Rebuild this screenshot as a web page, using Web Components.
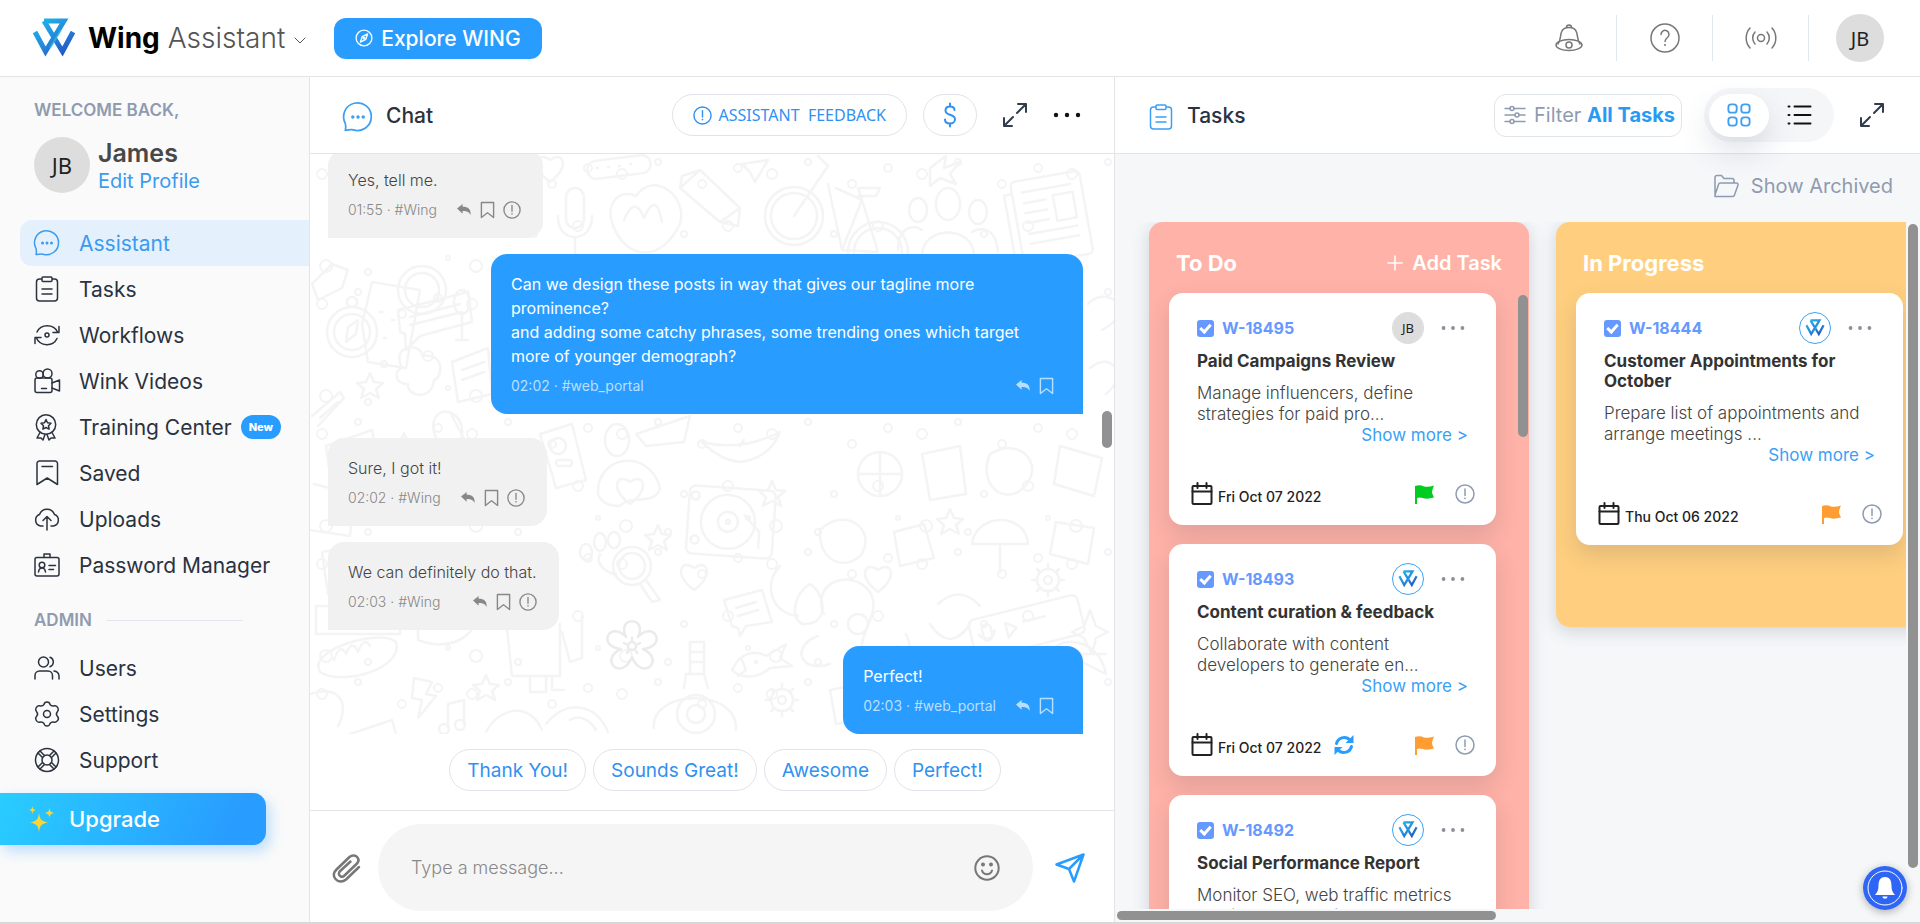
<!DOCTYPE html>
<html lang="en">
<head>
<meta charset="utf-8">
<title>Wing Assistant</title>
<meta name="viewport" content="width=device-width, initial-scale=1">
<style>
  html, body { height: 100%; }
  body {
    margin: 0;
    overflow: hidden;
    font-family: Inter, "Open Sans", sans-serif;
    color: #2b3240;
    --blue: #289dff;
    --line: #e4e4e6;
    --muted: #8f9bb0;
  }
</style>
</head>
<body>
<wing-app></wing-app>

<script>
const ICONS = {
  logo: ['0 0 44 40', `
    <defs><linearGradient id="g" gradientUnits="userSpaceOnUse" x1="8" y1="2" x2="34" y2="38">
      <stop offset="0" stop-color="#1fb5e8"/><stop offset=".5" stop-color="#2489dc"/><stop offset="1" stop-color="#2350c0"/>
    </linearGradient></defs>
    <path d="M12 3H32L13.5 33.500L3 14M12 3L30.500 33.500L41 14" stroke="url(#g)" stroke-width="5"/>
    <path d="M29 12L18 30" stroke="#35c3ec" stroke-width="2" opacity=".6"/>`],
  chat: ['0 0 26 26', '<path d="M2 24.500C2.800 22 2.500 20.500 2 18.500A12 12 0 1 1 9 24.200C6.500 23.600 4.500 24.500 2 24.500Z"/><g fill="currentColor" stroke="none"><circle cx="8.500" cy="13" r="1.500"/><circle cx="13" cy="13" r="1.500"/><circle cx="17.500" cy="13" r="1.500"/></g>'],
  tasks: ['0 0 26 26', '<rect x="2.500" y="3" width="21" height="22" rx="3"/><rect x="8" y="1" width="10" height="4.500" rx="1" fill="#fff"/><path d="M8 13h10M8 18h10"/>'],
  workflows: ['0 0 26 26', '<path d="M3 10A11 10 0 0 1 23.500 10M23 16.500A11 10 0 0 1 2.500 16M25 4.500V10.500H19M1 21.500V15.500H7"/><circle cx="13" cy="13" r="2"/>'],
  videos: ['0 0 26 26', '<circle cx="5.500" cy="6.500" r="3.700"/><circle cx="13.500" cy="5.500" r="4.500"/><rect x="1" y="10" width="17" height="14.500" rx="2"/><path d="M18 15L25.500 12V23L18 20M7.500 20.500h5"/>'],
  training: ['0 0 26 26', '<circle cx="12" cy="10.500" r="9.700"/><path d="M12 5.500l1.500 3.200 3.500.5-2.500 2.500.6 3.500-3.100-1.700-3.100 1.700.6-3.500L7 9.200l3.500-.5zM6 18.500L3 24h4l2 2 2-5.500M18 18.500L21 24h-4l-2 2-2-5.500"/>'],
  saved: ['0 0 26 26', '<path d="M3 3.500A2.500 2.500 0 0 1 5.500 1H21A2.500 2.500 0 0 1 23.500 3.500V24.500L13.200 18L3 24.500ZM8 6.500H18.500"/>'],
  uploads: ['0 0 26 26', '<path d="M9 20H6.500A6 6 0 0 1 5.500 8.500A8 8 0 0 1 20.500 8.500A6 6 0 0 1 19.500 20H17M13 24V11M9 14.500L13 10.500L17 14.500"/>'],
  password: ['0 0 26 26', '<rect x="1" y="5.500" width="24" height="18.500" rx="2"/><path d="M10 5.500V2H16V5.500M4.500 20C5 16.500 6.500 16 8 16S11 16.500 11.500 20M15 13.500h6.500M15 17.500h4.500"/><circle cx="8" cy="13" r="2.800"/>'],
  users: ['0 0 26 26', '<circle cx="9.500" cy="7" r="5"/><path d="M1 24V20.500A4.500 4.500 0 0 1 5.500 16H14A4.500 4.500 0 0 1 18.500 20.500V24M16 2.300A5 5 0 0 1 16 11.700M20 16A5.500 5.500 0 0 1 25 21V24"/>'],
  settings: ['0 0 26 26', '<path d="M10 3.500C10.300 1.500 11 1 13 1S15.700 1.500 16 3.500C17.500 5.500 18.500 5.300 20.500 4.800C22.500 4.300 23 5 24 7S24.500 9.500 23.200 11C22 12.500 22 13.500 23.200 15C24.500 16.500 25 17.500 24 19S22.500 21.700 20.500 21.200C18.500 20.700 17.500 20.500 16 22.500C15.700 24.500 15 25 13 25S10.300 24.500 10 22.500C8.500 20.500 7.500 20.700 5.500 21.200C3.500 21.700 3 21 2 19S1.500 16.500 2.800 15C4 13.500 4 12.500 2.800 11C1.500 9.500 1 9 2 7S3.500 4.300 5.500 4.800C7.500 5.300 8.500 5.500 10 3.500Z"/><circle cx="13" cy="13" r="3.500"/>'],
  support: ['0 0 26 26', '<circle cx="13" cy="13" r="11.500"/><circle cx="13" cy="13" r="5"/><path d="M4 6L8.500 10.500M6 4L10.500 8.500M22 6L17.500 10.500M20 4L15.500 8.500M4 20L8.500 15.500M6 22L10.500 17.500M22 20L17.500 15.500M20 22L15.500 17.500"/>'],
  sparkles: ['0 0 26 26', '<g fill="#fcd435" stroke="none"><path d="M10 7C11 13.500 12 15 19 16.500C12 18 11 19.500 10 26C9 19.500 8 18 1 16.500C8 15 9 13.500 10 7Z"/><path d="M20.500 1.500C21 5.500 21.500 6 25.500 7C21.500 8 21 8.500 20.500 12C20 8.500 19.500 8 15.500 7C19.500 6 20 5.500 20.500 1.500Z"/><path d="M3.500 0C4 3 4.500 3.300 7 4C4.500 4.700 4 5 3.500 8C3 5 2.500 4.700 0 4C2.500 3.300 3 3 3.500 0Z"/></g>'],
  compass: ['0 0 20 20', '<circle cx="10" cy="10" r="8.800"/><path d="M14 5.500L12 11.500L6 14.500L8 8.500Z"/><circle cx="10" cy="10" r="1"/>'],
  chevron: ['0 0 12 12', '<path d="M1 4L6 9L11 4"/>'],
  bell: ['0 0 30 30', '<path d="M4 21C7 17 6 13 7.500 9C8.500 6 11.500 4.500 15 4.500S21.500 6 22.500 9C24 13 23 17 26 21"/><ellipse cx="15" cy="22" rx="13" ry="5.500"/><circle cx="15" cy="22" r="3"/><path d="M12.500 4.500A2.500 2.500 0 1 1 17.500 4.500"/>'],
  help: ['0 0 30 30', '<circle cx="15" cy="15" r="14"/><path d="M11 11.500A4 4 0 1 1 17.500 14.500C15.500 16 15 16.500 15 18.500"/><circle cx="15" cy="22" r="1" fill="currentColor" stroke="none"/>'],
  broadcast: ['0 0 32 24', '<circle cx="16" cy="12" r="3.500"/><path d="M10 6A9 9 0 0 0 10 18M22 6A9 9 0 0 1 22 18M5 2A15 15 0 0 0 5 22M27 2A15 15 0 0 1 27 22"/>'],
  info: ['0 0 20 20', '<circle cx="10" cy="10" r="9"/><path d="M10 5V11.500"/><circle cx="10" cy="14.300" r=".9" fill="currentColor" stroke="none"/>'],
  dollar: ['0 0 14 26', '<path d="M11.500 8C11.500 5.500 9.500 4.500 7 4.500S2.500 6 2.500 8.500S4.500 12 7 12.800S12 14.500 12 17.300S9.500 21.500 7 21.500S2 20.500 2 17.500M7 1.500V4.500M7 21.500V24.500"/>'],
  expand: ['0 0 26 26', '<path d="M15 11L24 2M16 2H24V10M11 15L2 24M2 16V24H10"/>'],
  dots: ['0 0 28 8', '<g fill="currentColor" stroke="none"><circle cx="3" cy="4" r="2.200"/><circle cx="14" cy="4" r="2.200"/><circle cx="25" cy="4" r="2.200"/></g>'],
  reply: ['0 0 16 16', '<path d="M0 6.500L6 1.500V4.500C12 4.500 15 7 14.500 13.500C13 10 11 9 6 9V12Z" fill="currentColor" stroke="none"/>'],
  bookmark: ['0 0 16 18', '<path d="M1.500 1H14.500V17L8 12L1.500 17Z"/>'],
  sliders: ['0 0 20 20', '<path d="M0 3.500H5M9 3.500H20M0 10H10M14 10H20M0 16.500H5M9 16.500H20"/><circle cx="7" cy="3.500" r="2"/><circle cx="12" cy="10" r="2"/><circle cx="7" cy="16.500" r="2"/>'],
  grid: ['0 0 26 26', '<rect x="1.500" y="1.500" width="9" height="9" rx="3"/><rect x="15.500" y="1.500" width="9" height="9" rx="3"/><rect x="1.500" y="15.500" width="9" height="9" rx="3"/><rect x="15.500" y="15.500" width="9" height="9" rx="3"/>'],
  list: ['0 0 24 20', '<path d="M7 1.500H23M7 10H23M7 18.500H23M1 1.500H2M1 10H2M1 18.500H2"/>'],
  folder: ['0 0 26 24', '<path d="M2 22.500V3A2 2 0 0 1 4 1.500H8.500L11 4.500H19A2 2 0 0 1 21 6.500V9M2 21L5.500 10.500A2 2 0 0 1 7.500 9H23.500A1.500 1.500 0 0 1 25 11L21.500 21A2 2 0 0 1 19.500 22.500H3A1.500 1.500 0 0 1 2 21"/>'],
  plus: ['0 0 16 16', '<path d="M8 1V15M1 8H15"/>'],
  calendar: ['0 0 22 24', '<rect x="1.500" y="4" width="19" height="18" rx="1"/><path d="M1.500 9.500H20.500M6.500 1V6M15.500 1V6"/>'],
  flag: ['0 0 20 20', '<path d="M0 2Q5 .5 9 2.500Q13 3.500 19 1.500Q17 6 17 8Q17 10 19 13.500Q12 15.500 8 14Q4 13 2 14V20H0Z" fill="currentColor" stroke="none"/>'],
  sync: ['0 0 20 20', '<path d="M2.500 8.500A8 8 0 0 1 15.500 4.500M17.500 11.500A8 8 0 0 1 4.500 15.500" stroke-width="3"/><path d="M19.500 0V8H11.500ZM.5 20V12H8.500Z" fill="currentColor" stroke="none"/>'],
  clip: ['0 0 30 30', '<path d="M27 14L14 26.500C10.500 29.500 6 29 3.500 26S1.500 19.500 4.500 16.500L17.500 4C20 1.700 23.500 2 25.300 4.200S26.500 9 24.500 11L12.500 22.500C11 24 9 24 7.700 22.700S6.700 19.500 8.200 18L18.500 8.500"/>'],
  smile: ['0 0 26 26', '<circle cx="13" cy="13" r="11.700"/><path d="M8 15.500C9.500 20.500 16.500 20.500 18 15.500"/><g fill="currentColor" stroke="none"><circle cx="9" cy="9.500" r="2"/><circle cx="17" cy="9.500" r="2"/></g>'],
  send: ['0 0 30 30', '<path d="M28.500 1.500L1.500 11.500L14 16L19 28.500ZM28.500 1.500L14 16"/>'],
  alert: ['0 0 44 44', '<circle cx="22" cy="22" r="22" fill="#2f65f5" stroke="none"/><circle cx="22" cy="22" r="17" stroke="#fff" stroke-width="1"/><path d="M22 11C16.500 11 15.500 15.500 15.500 20C15.500 24.500 14 26.500 12 29H32C30 26.500 28.500 24.500 28.500 20C28.500 15.500 27.500 11 22 11ZM19.500 30.500H24.500C24.500 33.500 19.500 33.500 19.500 30.500Z" fill="#fff" stroke="none"/>']
};

const define = (name, html, setup) => {
  const template = document.createElement('template');
  template.innerHTML = html;
  customElements.define(name, class extends HTMLElement {
    constructor() {
      super();
      this.attachShadow({ mode: 'open' });
      this.shadowRoot.appendChild(template.content.cloneNode(true));
    }
    connectedCallback() {
      if (setup) setup(this, this.shadowRoot);
    }
  });
};

define('wing-icon', `
  <style>
    :host { display: inline-block; flex: none; width: 26px; height: 26px; white-space: normal; }
    svg { display: block; width: 100%; height: 100%; overflow: visible; }
  </style>
  <svg fill="none" stroke="currentColor" aria-hidden="true"></svg>
`, (host, root) => {
  const [viewBox, shapes] = ICONS[host.getAttribute('name')];
  const svg = root.querySelector('svg');
  svg.setAttribute('viewBox', viewBox);
  svg.setAttribute('stroke-width', host.getAttribute('weight') || '1.5');
  if (host.getAttribute('name') !== 'logo') {
    svg.setAttribute('stroke-linecap', 'round');
    svg.setAttribute('stroke-linejoin', 'round');
  }
  svg.innerHTML = shapes;
});

define('wing-avatar', `
  <style>
    :host {
      display: flex; flex: none; align-items: center; justify-content: center; box-sizing: border-box;
      width: 48px; height: 48px; border-radius: 50%; background: #ddd; color: #222;
      font: 20px "Noto Sans", "Open Sans", sans-serif;
    }
    :host([size="large"]) { width: 56px; height: 56px; font-size: 22px; }
    :host([size="small"]) { width: 32px; height: 32px; font-size: 13px; }
    :host([brand]) { background: #fff; border: 1px solid #3ba2f5; }
    wing-icon { width: 20px; height: 18px; }
  </style>
  <slot></slot>
`, (host, root) => {
  if (host.hasAttribute('brand')) root.querySelector('slot').innerHTML = '<wing-icon name="logo"></wing-icon>';
});

define('wing-header', `
  <style>
    :host {
      display: flex; align-items: center; height: 76px; padding: 0 36px 0 32px;
      background: #fff; border-bottom: 1px solid var(--line);
    }
    .brand {
      display: flex; align-items: center; padding: 0; border: 0; background: none;
      font: 300 28px Inter, sans-serif; color: #555; margin-right: 28px;
    }
    .brand wing-icon { width: 44px; height: 40px; margin-right: 12px; }
    .brand strong { color: #000; font-weight: 700; margin-right: 8px; }
    .brand .down { width: 12px; height: 12px; margin: 4px 0 0 9px; }
    .explore {
      display: flex; align-items: center; gap: 8px; height: 41px; padding: 0 21px; border: 0; border-radius: 12px;
      background: var(--blue); color: #fff; font: 500 21px Inter, sans-serif;
    }
    .explore wing-icon { width: 18px; height: 18px; }
    .tools { display: flex; align-items: center; margin-left: auto; }
    .tools button {
      display: flex; justify-content: center; width: 96px; padding: 8px 0; border: 0;
      border-right: 1px solid #e2e9ee; background: none; color: #777;
    }
    .tools wing-icon { width: 32px; height: 30px; }
    wing-avatar { margin-left: 27px; }
  </style>
  <button class="brand"><wing-icon name="logo"></wing-icon><strong>Wing</strong>Assistant<wing-icon class="down" name="chevron" weight="1"></wing-icon></button>
  <button class="explore"><wing-icon name="compass"></wing-icon>Explore WING</button>
  <div class="tools">
    <button aria-label="Notifications"><wing-icon name="bell"></wing-icon></button>
    <button aria-label="Help"><wing-icon name="help"></wing-icon></button>
    <button aria-label="Live"><wing-icon name="broadcast"></wing-icon></button>
    <wing-avatar>JB</wing-avatar>
  </div>
`);

define('wing-nav-item', `
  <style>
    :host { display: block; margin-left: 20px; }
    a {
      display: flex; align-items: center; height: 46px; padding-left: 14px; border-radius: 12px 0 0 12px;
      color: inherit; text-decoration: none; font-size: 21px;
    }
    wing-icon { margin-right: 19px; }
    :host([active]) a { background: #e4f1fc; color: #3b9bf0; }
  </style>
  <a href="#"><slot></slot></a>
`, (host, root) => {
  root.querySelector('a').insertAdjacentHTML('afterbegin', `<wing-icon name="${host.getAttribute('icon')}"></wing-icon>`);
});

define('wing-sidebar', `
  <style>
    :host { display: block; background: #fafafa; border-right: 1px solid var(--line); overflow: hidden; }
    h2 { margin: 0 0 0 34px; font-size: 17px; line-height: 20px; font-weight: 600; color: var(--muted); }
    .welcome { padding-top: 23px; }
    .profile { display: flex; gap: 8px; margin: 15px 0 25px 34px; align-items: center; }
    .profile div { padding-top: 2px; }
    .name { font-size: 25px; line-height: 28px; font-weight: 600; color: #484848; }
    .profile a { font-size: 20px; line-height: 28px; color: #3b9bf0; text-decoration: none; }
    .admin { display: flex; align-items: center; gap: 14px; margin: 22px 66px 15px 34px; }
    .admin::after { content: ""; flex: 1; border-top: 1px solid #e2e5e9; }
    .new {
      margin-left: 9px; padding: 0 8px; border-radius: 12px; background: var(--blue); color: #fff;
      font-size: 11px; line-height: 24px; font-weight: 800;
    }
    .upgrade {
      display: flex; align-items: center; gap: 14px; width: 266px; height: 52px; margin-top: 10px; padding: 0 0 0 29px;
      border: 0; border-radius: 0 13px 13px 0; color: #fff; font: 500 22px Inter, sans-serif;
      background: linear-gradient(115deg, #29cdff, #289dff 85%); box-shadow: 4px 6px 14px rgba(40, 157, 255, .3);
    }
  </style>
  <h2 class="welcome">WELCOME BACK,</h2>
  <div class="profile">
    <wing-avatar size="large">JB</wing-avatar>
    <div><div class="name">James</div><a href="#">Edit Profile</a></div>
  </div>
  <nav>
    <wing-nav-item icon="chat" active>Assistant</wing-nav-item>
    <wing-nav-item icon="tasks">Tasks</wing-nav-item>
    <wing-nav-item icon="workflows">Workflows</wing-nav-item>
    <wing-nav-item icon="videos">Wink Videos</wing-nav-item>
    <wing-nav-item icon="training">Training Center<span class="new">New</span></wing-nav-item>
    <wing-nav-item icon="saved">Saved</wing-nav-item>
    <wing-nav-item icon="uploads">Uploads</wing-nav-item>
    <wing-nav-item icon="password">Password Manager</wing-nav-item>
    <h2 class="admin">ADMIN</h2>
    <wing-nav-item icon="users">Users</wing-nav-item>
    <wing-nav-item icon="settings">Settings</wing-nav-item>
    <wing-nav-item icon="support">Support</wing-nav-item>
  </nav>
  <button class="upgrade"><wing-icon name="sparkles"></wing-icon>Upgrade</button>
`);

define('wing-panel-bar', `
  <style>
    :host {
      display: flex; flex: none; align-items: center; height: 76px; padding: 0 33px;
      background: #fff; border-bottom: 1px solid var(--line);
    }
    h1 { margin: 0 auto 0 13px; font-size: 21px; font-weight: 500; }
    ::slotted(wing-icon) { margin-top: 4px; color: #3b9ff5; }
  </style>
  <slot name="icon"></slot>
  <h1><slot name="title"></slot></h1>
  <slot></slot>
`);

define('wing-bubble', `
  <style>
    :host {
      display: block; box-sizing: border-box; align-self: flex-start; padding: 18px 22px 16px 20px; max-width: 592px;
      border-radius: 16px 16px 16px 0; background: #f1f1f1; color: #444;
      font-size: 16px; line-height: 24px; font-weight: 300;
    }
    :host([mine]) {
      align-self: flex-end; padding-right: 29px; border-radius: 16px 16px 0 16px;
      background: var(--blue); color: #fff; font-weight: 400;
    }
    .meta { display: flex; align-items: center; margin-top: 6px; font-size: 14px; color: #888; }
    .meta span { margin-right: auto; padding-right: 12px; }
    :host([mine]) .meta { color: #b9dfff; }
    button { display: flex; padding: 0; border: 0; background: none; color: inherit; margin-left: 8px; }
    wing-icon { width: 15px; height: 18px; }
    .report wing-icon { width: 18px; }
    :host([mine]) .report { display: none; }
  </style>
  <slot></slot>
  <div class="meta">
    <span></span>
    <button aria-label="Reply"><wing-icon name="reply"></wing-icon></button>
    <button aria-label="Save"><wing-icon name="bookmark"></wing-icon></button>
    <button class="report" aria-label="Report"><wing-icon name="info"></wing-icon></button>
  </div>
`, (host, root) => {
  root.querySelector('span').textContent = host.getAttribute('meta');
});

// Faint line drawings behind the conversation
define('wing-doodles', `
  <style>
    :host { position: absolute; inset: 0; overflow: hidden; }
    svg { width: 100%; height: 100%; }
  </style>
  <svg viewBox="0 0 805 580" preserveAspectRatio="xMinYMin slice" fill="none" stroke="#f4f4f4" stroke-width="2.500" stroke-linecap="round" stroke-linejoin="round" aria-hidden="true">
    <defs>
      <pattern id="bits" width="150" height="130" patternUnits="userSpaceOnUse">
        <g stroke-width="2"><circle cx="12" cy="20" r="5"/><circle cx="48" cy="8" r="3"/><circle cx="92" cy="30" r="4"/><circle cx="128" cy="14" r="4"/><circle cx="74" cy="80" r="3"/><circle cx="118" cy="72" r="5"/><circle cx="16" cy="112" r="6"/><circle cx="58" cy="118" r="3"/><circle cx="138" cy="104" r="2"/></g>
      </pattern>
      <path id="star" d="M0-13L4-4L13-3L6 3L9 12L0 7L-9 12L-6 3L-13-3L-4-4Z"/>
      <path id="heart" d="M0 14C-22-2-12-18 0-8C12-18 22-2 0 14Z"/>
      <g id="note"><path d="M-6 12V-12L10-16V8"/><circle cx="-10" cy="13" r="5"/><circle cx="6" cy="9" r="5"/></g>
      <g id="cog"><circle r="11"/><circle r="4"/><path d="M0-11V-16M0 11V16M-11 0H-16M11 0H16M-8-8L-11-11M8 8L11 11M-8 8L-11 11M8-8L11-11"/></g>
    </defs>
    <rect width="805" height="580" fill="url(#bits)" stroke="none"/>
    <use href="#heart" x="240" y="14"/><rect x="277" y="4" width="64" height="18" rx="9" transform="rotate(-7 309 13)"/><path d="M287 14h1M298 13h1M309 12h1M320 10h1"/>
    <g transform="translate(265 62)"><rect x="-9" y="-28" width="18" height="40" rx="9"/><path d="M-17 0C-18 28 18 28 17 0M0 21V38"/></g>
    <path d="M305 76C292 50 310 34 326 42C344 16 378 42 370 70C350 110 318 104 305 76ZM314 66Q325 40 334 64Q346 36 352 68"/>
    <path d="M372 22L390 16L430 54L428 72L410 68L370 34ZM390 16L370 34M430 54L410 68"/>
    <path d="M432 10L458 6L445 28L440 18Z"/>
    <g><circle cx="484" cy="62" r="29"/><circle cx="484" cy="62" r="23"/><circle cx="568" cy="98" r="30"/><circle cx="568" cy="98" r="24"/><path d="M484 62L518 12L508 2M518 30L532 96L568 98L552 46L526 34M532 96L552 46L548 34H570L566 42H548"/></g>
    <path d="M620 14L636 2L634 14L650 8L640 20L646 30L630 24L620 32Z"/>
    <g><ellipse cx="638" cy="50" rx="12" ry="16"/><ellipse cx="608" cy="56" rx="9" ry="12"/><ellipse cx="668" cy="58" rx="9" ry="12"/><path d="M612 104C610 70 666 70 664 104M588 96C588 72 604 70 612 76M688 98C686 74 672 72 662 78"/></g>
    <g transform="rotate(-10 740 60)"><rect x="706" y="22" width="70" height="84" rx="5"/><path d="M716 34H765M716 45H738M716 55H738M716 65H738M716 76H765M716 86H765M706 34H698V106H736"/><rect x="746" y="42" width="20" height="26"/></g>
    <path d="M62 128L110 136L96 214L58 208L52 170ZM70 158h2M82 166h2M74 184h2"/><circle cx="112" cy="136" r="24"/><circle cx="112" cy="136" r="17"/><ellipse cx="152" cy="148" rx="8" ry="12"/><path d="M152 160V184M146 186H158"/>
    <g><circle cx="42" cy="178" r="25"/><circle cx="42" cy="178" r="18"/><path d="M36 188L38 173L48 166L46 180Z"/><circle cx="42" cy="148" r="5"/></g>
    <path d="M88 156L158 138L162 168L110 182L96 196L95 180L90 178ZM100 163L150 150M100 171L152 158"/>
    <path d="M142 208L178 194L182 240L148 248ZM152 216L174 208M152 226L174 218"/>
    <use href="#star" x="60" y="232"/><path d="M92 214C80 190 112 188 112 202C134 198 134 222 124 226C122 248 96 242 98 230C84 230 84 216 92 214Z"/>
    <path d="M2 262L30 238L34 244L8 272M10 264L28 248"/><path d="M16 292L62 276L70 316L20 322Z"/><use href="#star" x="94" y="292"/>
    <path d="M135 296C110 270 130 248 146 262C158 274 152 296 135 296ZM140 258L162 300"/>
    <path d="M230 280L262 270L276 326L246 334Z"/><circle cx="248" cy="292" r="8"/><rect x="246" y="306" width="16" height="6" rx="3"/>
    <ellipse cx="307" cy="286" rx="12" ry="16"/><path d="M326 280L380 262L374 288L336 292Z"/>
    <path d="M288 340C286 300 340 294 350 334C346 352 320 340 310 352C300 352 292 350 288 340Z"/><use href="#heart" x="320" y="336"/>
    <path d="M392 288Q430 298 470 278Q460 304 430 308Q410 306 392 288ZM430 292L434 286"/>
    <g transform="rotate(4 420 366)"><rect x="378" y="334" width="86" height="68" rx="6"/><circle cx="418" cy="368" r="27"/><circle cx="418" cy="368" r="10"/><circle cx="418" cy="368" r="2"/><circle cx="384" cy="344" r="4"/><circle cx="386" cy="388" r="4"/><path d="M434 360L450 376V392"/></g>
    <use href="#star" x="462" y="340"/><use href="#star" x="348" y="384"/>
    <ellipse cx="276" cy="398" rx="6" ry="8"/><ellipse cx="290" cy="388" rx="6" ry="9"/><ellipse cx="304" cy="386" rx="6" ry="8"/><circle cx="322" cy="412" r="19"/><circle cx="322" cy="412" r="13"/><path d="M336 426L350 446L342 448L330 430M290 400C284 412 300 420 306 420"/>
    <use href="#heart" x="384" y="422"/><path d="M414 446L452 436L462 468L436 472L430 482L428 474L422 472ZM426 454L446 448M428 462L448 456"/>
    <path d="M470 412C452 430 462 460 488 462M500 430C484 440 480 462 492 470C520 472 516 440 500 430"/>
    <g transform="translate(322 492)" stroke="#ebebeb"><path d="M-6-9C-16-30 16-30 6-9C22-26 36 0 11 3C34 14 10 36 0 11C-10 36-34 14-11 3C-36 0-22-26-6-9Z"/><circle r="4"/><path d="M0-8V-6M8-3L6-2M5 7L4 5M-5 7L-4 5M-8-3L-6-2"/></g>
    <path d="M10 518C-4 496 70 474 86 488C94 516 30 532 10 518ZM24 506Q30 488 36 500Q42 484 48 498Q54 482 60 492"/>
    <path d="M108 458V486Q140 498 160 478L166 462M196 466L202 522H250V470M252 478L260 508L272 504V462M220 522V538H236V522M242 522V536H254"/>
    <path d="M104 524L122 528L116 540L126 542L108 564L112 546L102 544Z"/><use href="#star" x="176" y="534"/><use href="#note" x="144" y="562"/>
    <path d="M0 540C30 530 40 550 28 572M40 580L82 566L86 580M176 578C190 552 220 548 232 576M236 570C258 544 286 550 298 578M260 566C270 560 280 566 286 576"/>
    <path d="M422 516C430 498 446 496 456 502L476 490L470 504L482 512L460 514C446 526 430 524 422 516ZM432 506L436 516L428 522"/><circle cx="446" cy="508" r="1"/>
    <g><path d="M344 574C340 536 428 532 426 576M374 534L376 520H394L398 534M380 520V488H394V520M380 498H394M380 508H394"/><circle cx="386" cy="560" r="19"/><circle cx="386" cy="560" r="9"/></g><use href="#cog" x="472" y="546"/>
    <g><path d="M514 460C500 430 540 412 560 438C574 464 540 482 556 510C580 532 612 516 596 480M508 482C480 492 490 520 520 510"/><path d="M620 470Q640 500 660 470M628 450Q650 430 670 452"/><circle cx="548" cy="470" r="10"/></g>
    <g transform="rotate(-14 720 470)"><rect x="660" y="452" width="112" height="40" rx="6"/><rect x="672" y="460" width="9" height="14" rx="4"/><path d="M668 468Q676 484 684 468M696 463V478L706 470ZM714 466H736"/></g>
    <path d="M780 456L786 472L798 478L786 484L782 500L774 484L762 478L774 472ZM744 494C760 480 790 490 796 520ZM744 500H796"/>
    <g><circle cx="570" cy="320" r="22"/><path d="M548 320H592M570 298V342"/><path d="M612 300L650 292L656 340L620 346ZM680 300C712 280 740 316 708 338C690 348 668 328 680 300ZM750 292L792 304L784 342L744 330Z"/><use href="#star" x="640" y="368"/><path d="M510 376C534 352 566 374 552 400C536 418 508 408 510 376ZM584 378L614 370L624 404L590 412ZM662 390C666 358 716 358 718 390ZM690 390V418M746 368L784 374L778 410L740 400Z"/><use href="#heart" x="568" y="424"/><use href="#cog" x="738" y="426"/></g>
    <path d="M4 330L44 340L40 382L0 376M12 398L56 390V432L18 440ZM6 452H90V480H6Z"/><path d="M520 536L560 528L566 564L526 570Z"/><use href="#note" x="616" y="552"/>
    <path d="M2 130L22 110L38 116L32 134L8 146ZM778 150C796 130 830 156 792 176M780 214C800 196 820 220 796 240"/>
  </svg>
`);

define('wing-thumb', `
  <style>
    :host { display: block; flex: none; box-sizing: border-box; width: 10px; border-radius: 5px; background: #919191; }
  </style>
`);

define('wing-chat', `
  <style>
    :host { display: flex; flex-direction: column; min-width: 0; min-height: 0; background: #fff; border-right: 1px solid var(--line); }
    .pill {
      display: flex; align-items: center; gap: 7px; height: 42px; padding: 0 20px; border: 1px solid #e0e3ea;
      border-radius: 21px; background: #fff; color: #3191f0; font: 16px "Noto Sans", "Open Sans", sans-serif; white-space: pre;
    }
    .pill wing-icon { width: 19px; height: 19px; }
    .cash { margin: 0 25px 0 16px; padding: 0 19px; }
    .cash wing-icon { width: 14px; height: 26px; }
    .bare { display: flex; padding: 0; border: 0; background: none; color: #333c4d; }
    .expand { margin-right: 25px; }
    .more wing-icon { width: 28px; height: 8px; color: #111; }
    wing-panel-bar wing-icon[slot] { width: 30px; height: 30px; }
    .log {
      position: relative; flex: 1; min-height: 0; overflow: hidden; display: flex; flex-direction: column;
      justify-content: flex-end; gap: 24px; padding: 0 31px 0 18px;
    }
    .group { position: relative; display: flex; flex-direction: column; gap: 16px; }
    .log wing-thumb { position: absolute; top: 257px; right: 2px; height: 37px; }
    .quick { display: flex; justify-content: center; gap: 7px; padding: 15px 0 19px 26px; border-bottom: 1px solid var(--line); }
    .quick .pill { font: 19px Inter, sans-serif; padding: 0 17px; }
    form { display: flex; align-items: center; padding: 13px 29px 11px 22px; }
    .field {
      display: flex; flex: 1; align-items: center; height: 87px; margin: 0 22px 0 16px; padding: 0 33px;
      box-sizing: border-box; border-radius: 44px; background: #f5f5f5;
    }
    input { flex: 1; min-width: 0; padding: 0; border: 0; outline: 0; background: none; font: 300 18px Inter, sans-serif; }
    input::placeholder { color: #888; }
    .grey { color: #777; }
    .send, .clip { width: 30px; height: 30px; }
    .send { color: var(--blue); }
  </style>
  <wing-panel-bar>
    <wing-icon slot="icon" name="chat"></wing-icon><span slot="title">Chat</span>
    <button class="pill"><wing-icon name="info"></wing-icon>ASSISTANT  FEEDBACK</button>
    <button class="pill cash" aria-label="Billing"><wing-icon name="dollar" weight="2"></wing-icon></button>
    <button class="bare expand" aria-label="Expand chat"><wing-icon name="expand" weight="2"></wing-icon></button>
    <button class="bare more" aria-label="More"><wing-icon name="dots"></wing-icon></button>
  </wing-panel-bar>
  <div class="log">
    <wing-doodles></wing-doodles>
    <div class="group">
      <wing-bubble meta="01:55 · #Wing">Yes, tell me.</wing-bubble>
      <wing-bubble mine meta="02:02 · #web_portal">Can we design these posts in way that gives our tagline more prominence?<br>and adding some catchy phrases, some trending ones which target more of younger demograph?</wing-bubble>
    </div>
    <div class="group">
      <wing-bubble meta="02:02 · #Wing">Sure, I got it!</wing-bubble>
      <wing-bubble meta="02:03 · #Wing">We can definitely do that.</wing-bubble>
      <wing-bubble mine meta="02:03 · #web_portal">Perfect!</wing-bubble>
    </div>
    <wing-thumb></wing-thumb>
  </div>
  <div class="quick">
    <button class="pill">Thank You!</button>
    <button class="pill">Sounds Great!</button>
    <button class="pill">Awesome</button>
    <button class="pill">Perfect!</button>
  </div>
  <form>
    <button type="button" class="bare grey" aria-label="Attach a file"><wing-icon class="clip" name="clip" weight="2.500"></wing-icon></button>
    <div class="field">
      <input type="text" aria-label="Message" placeholder="Type a message...">
      <button type="button" class="bare grey" aria-label="Emoji"><wing-icon name="smile" weight="2"></wing-icon></button>
    </div>
    <button type="button" class="bare" aria-label="Send"><wing-icon class="send" name="send" weight="2.500"></wing-icon></button>
  </form>
`);

define('wing-task-card', `
  <style>
    :host {
      display: block; padding: 19px 28px; border-radius: 14px; background: #fff; color: #444;
      box-shadow: 0 10px 22px rgba(60, 60, 80, .16);
    }
    .top { display: flex; align-items: center; height: 32px; margin-bottom: 7px; }
    label { display: flex; align-items: center; gap: 8px; margin-right: auto; font-size: 16px; font-weight: 700; color: #6699ff; }
    input {
      appearance: none; width: 17px; height: 17px; margin: 0; border-radius: 3px; background: #6699ff;
    }
    input:checked::after {
      content: ""; display: block; width: 4px; height: 8px; margin: 2px 0 0 5px;
      border: solid #fff; border-width: 0 3px 3px 0; transform: rotate(42deg);
    }
    button { display: flex; padding: 0; border: 0; background: none; color: #8c8f96; }
    .more { margin: 0 3px 0 17px; }
    .more wing-icon { width: 24px; height: 8px; }
    h3 { margin: 0 0 12px; font-size: 17px; line-height: 20px; font-weight: 700; color: #333; }
    p { margin: 0; font-size: 17px; line-height: 21px; font-weight: 300; white-space: pre-line; }
    a { display: block; text-align: right; font-size: 17px; line-height: 21px; color: #3b9ff5; text-decoration: none; }
    .foot { display: flex; align-items: center; height: 24px; margin: 36px -7px 0 -6px; font-size: 14px; font-weight: 500; color: #222; }
    .foot time { margin: 4px auto 0 5px; }
    .calendar { width: 22px; height: 24px; }
    .flag { width: 20px; height: 20px; margin-right: 20px; color: #ff9d33; }
    :host([priority="low"]) .flag { color: #00cc22; }
    .sync { display: none; width: 20px; height: 20px; color: #289dff; }
    :host([recurring]) time { margin-right: 13px; }
    :host([recurring]) .sync { display: block; margin-right: auto; }
    .foot button wing-icon { width: 20px; height: 20px; color: var(--muted); }
  </style>
  <div class="top">
    <label><input type="checkbox" checked><span></span></label>
    <slot name="who"><wing-avatar size="small" brand></wing-avatar></slot>
    <button class="more" aria-label="Task menu"><wing-icon name="dots"></wing-icon></button>
  </div>
  <h3></h3>
  <p><slot></slot></p>
  <a href="#">Show more &gt;</a>
  <div class="foot">
    <wing-icon class="calendar" name="calendar" weight="2"></wing-icon><time></time>
    <wing-icon class="sync" name="sync"></wing-icon>
    <wing-icon class="flag" name="flag"></wing-icon>
    <button aria-label="Report"><wing-icon name="info"></wing-icon></button>
  </div>
`, (host, root) => {
  root.querySelector('label span').textContent = host.getAttribute('code');
  root.querySelector('h3').textContent = host.getAttribute('heading');
  root.querySelector('time').textContent = host.getAttribute('due');
});

define('wing-column', `
  <style>
    :host {
      display: block; flex: none; box-sizing: border-box; width: 380px; padding: 20px 2px 82px 20px; border-radius: 14px;
      background: #ffb2a7; box-shadow: 0 4px 18px rgba(60, 70, 90, .2);
    }
    :host([tone="amber"]) { background: #ffcf7f; }
    header { display: flex; align-items: center; height: 42px; margin-bottom: 9px; padding: 0 25px 0 7px; color: #fff; }
    h2 { margin: 0 auto 0 0; font-size: 22px; font-weight: 700; }
    .body { display: flex; }
    .cards { display: flex; flex: 1; flex-direction: column; gap: 19px; margin-right: 22px; }
    .track { width: 9px; padding-top: 2px; }
  </style>
  <header><h2><slot name="title"></slot></h2><slot name="action"></slot></header>
  <div class="body">
    <div class="cards"><slot></slot></div>
    <div class="track"><slot name="thumb"></slot></div>
  </div>
`);

define('wing-tasks', `
  <style>
    :host { display: flex; flex-direction: column; min-width: 0; min-height: 0; background: #f5f7f9; }
    button { display: flex; align-items: center; padding: 0; border: 0; background: none; color: #333c4d; font: 20px Inter, sans-serif; }
    wing-panel-bar { position: relative; padding-right: 35px; }
    wing-icon[slot] { width: 26px; height: 28px; }
    .filter { gap: 9px; height: 43px; padding: 0 6px 0 10px; border: 1px solid #e0e5ea; border-radius: 12px; color: var(--muted); }
    .filter wing-icon { width: 20px; height: 20px; }
    .filter strong { color: #289af5; font-weight: 700; }
    .toggle { display: flex; align-items: center; gap: 18px; box-sizing: border-box; height: 54px; margin: 0 25px 0 22px; padding: 0 22px 0 5px; border-radius: 27px; background: #f5f6f8; }
    .toggle .on { justify-content: center; width: 60px; height: 43px; border-radius: 22px; background: #fff; color: #3b9ff5; box-shadow: 0 14px 30px rgba(80, 95, 130, .18); }
    .toggle .on wing-icon { width: 24px; height: 24px; }
    .toggle .list { width: 25px; height: 20px; color: #111; }
    .archived { gap: 12px; margin: 18px 27px 23px auto; height: 27px; color: var(--muted); z-index: 1; }
    .archived wing-icon { height: 24px; }
    .scroll { display: flex; flex: 1; min-height: 0; }
    .board { display: flex; flex: 1; align-items: flex-start; gap: 27px; min-width: 0; padding-left: 34px; overflow: hidden; }
    .add { gap: 9px; color: #fff; font-weight: 600; }
    .add wing-icon { width: 16px; height: 16px; }
    .down { padding: 2px 2px 0 2px; }
    .down wing-thumb { height: 94%; }
    .across { padding: 2px; }
    .across wing-thumb { width: 379px; height: 9px; }
    .column-thumb { height: 142px; }
  </style>
  <wing-panel-bar>
    <wing-icon slot="icon" name="tasks"></wing-icon><span slot="title">Tasks</span>
    <button class="filter"><wing-icon name="sliders"></wing-icon><span>Filter <strong>All Tasks</strong></span></button>
    <div class="toggle">
      <button class="on" aria-label="Board view"><wing-icon name="grid" weight="2"></wing-icon></button>
      <button aria-label="List view"><wing-icon class="list" name="list" weight="2"></wing-icon></button>
    </div>
    <button aria-label="Expand tasks"><wing-icon name="expand" weight="2"></wing-icon></button>
  </wing-panel-bar>
  <button class="archived"><wing-icon name="folder"></wing-icon>Show Archived</button>
  <div class="scroll">
    <div class="board">
      <wing-column>
        <span slot="title">To Do</span>
        <button slot="action" class="add"><wing-icon name="plus"></wing-icon>Add Task</button>
        <wing-task-card code="W-18495" heading="Paid Campaigns Review" due="Fri Oct 07 2022" priority="low"><wing-avatar slot="who" size="small">JB</wing-avatar>Manage influencers, define
strategies for paid pro...</wing-task-card>
        <wing-task-card code="W-18493" heading="Content curation &amp; feedback" due="Fri Oct 07 2022" recurring>Collaborate with content
developers to generate en...</wing-task-card>
        <wing-task-card code="W-18492" heading="Social Performance Report" due="Fri Oct 07 2022">Monitor SEO, web traffic metrics
and improve ranking...</wing-task-card>
        <wing-thumb slot="thumb" class="column-thumb"></wing-thumb>
      </wing-column>
      <wing-column tone="amber">
        <span slot="title">In Progress</span>
        <wing-task-card code="W-18444" heading="Customer Appointments for October" due="Thu Oct 06 2022">Prepare list of appointments and
arrange meetings ...</wing-task-card>
      </wing-column>
    </div>
    <div class="down"><wing-thumb></wing-thumb></div>
  </div>
  <div class="across"><wing-thumb></wing-thumb></div>
`);

define('wing-app', `
  <style>
    :host {
      display: grid; grid-template: auto minmax(0, 1fr) / 310px minmax(0, 1fr) minmax(0, 1fr);
      box-sizing: border-box; height: 100vh; border-bottom: 2px solid #d8d8d8;
    }
    wing-header { grid-column: 1 / -1; }
    .alerts { position: fixed; right: 13px; bottom: 14px; padding: 0; border: 0; border-radius: 50%; background: none; box-shadow: 0 2px 8px rgba(0, 0, 0, .3); }
    .alerts wing-icon { display: block; width: 44px; height: 44px; }
  </style>
  <wing-header></wing-header>
  <wing-sidebar></wing-sidebar>
  <wing-chat></wing-chat>
  <wing-tasks></wing-tasks>
  <button class="alerts" aria-label="Alerts"><wing-icon name="alert"></wing-icon></button>
`);
</script>
</body>
</html>
